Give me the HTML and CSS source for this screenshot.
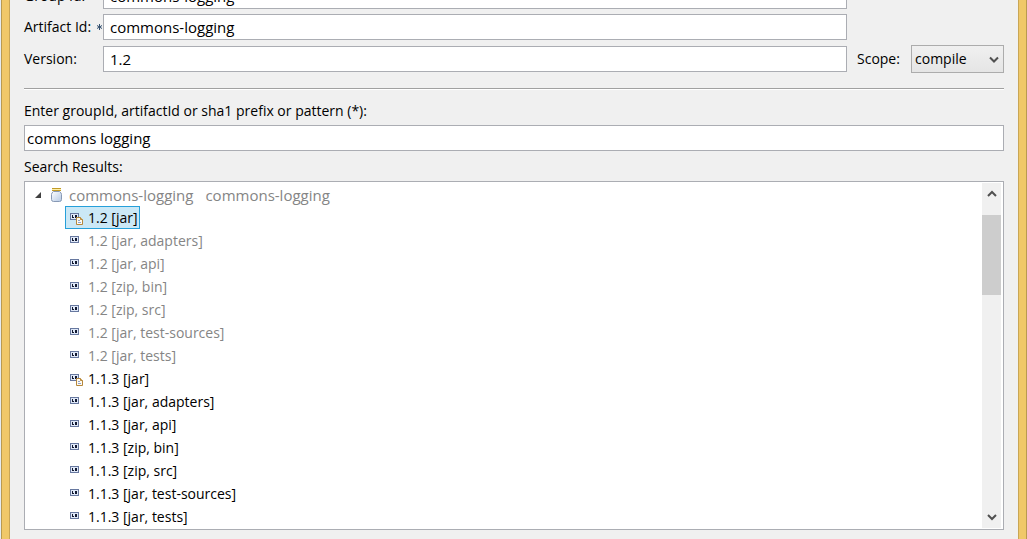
FILE: index.html
```html
<!DOCTYPE html>
<html lang="en">
<head>
  <meta charset="UTF-8" />
  <meta name="viewport" content="width=device-width, initial-scale=1.0"/>
  <title>Select Dependency</title>
  <link rel="stylesheet" href="styles.css">
</head>
<body>
<svg class="sprite" aria-hidden="true">
  <defs>
    <linearGradient id="glass" x1="0" y1="0" x2="1" y2="1">
      <stop offset="0" stop-color="#ffffff"/>
      <stop offset="1" stop-color="#b4c8e4"/>
    </linearGradient>
  </defs>
  <symbol id="jar" viewBox="0 0 11 14">
    <path d="M1 .5h9M1 2.5h9" stroke="#c09a28"/>
    <path d="M1 1.5h9" stroke="#fff0a8"/>
    <path d="M2.5 3.5h6q2 1.2 2 3v5q0 2-2 2h-6q-2 0-2-2v-5q0-1.8 2-3z" fill="url(#glass)" stroke="#8799b5"/>
  </symbol>
  <symbol id="binary" viewBox="0 0 9 7">
    <rect x=".5" y=".5" width="8" height="6" fill="#dfe8f8" stroke="#67789f"/>
    <path d="M2 2h1v2h1v1h-2z" fill="#101830"/>
    <rect x="5.500" y="2.500" width="1" height="2" fill="none" stroke="#101830"/>
  </symbol>
  <symbol id="binary-source" viewBox="0 0 13 15">
    <use href="#binary" y="3" width="9" height="7"/>
    <path d="M6.500 7.500h4l2 2v5h-6z" fill="#fffaf0" stroke="#b5873c"/>
    <path d="M10.500 7.500v2h2" fill="#f2d48c" stroke="#b5873c"/>
    <path d="M8 10.500h2M8 12.500h3" stroke="#8fa3cc"/>
  </symbol>
</svg>

<main class="dialog">
  <div class="fields">
    <label for="group">Group Id:</label>
    <input type="text" id="group" value="commons-logging" />

    <label for="artifact" class="required">Artifact Id:
      <svg width="5" height="6" viewBox="0 0 5 6"><path d="M2.500 0v6M0 1.500l5 3M0 4.500l5-3" stroke="#34506f"/></svg>
    </label>
    <input type="text" id="artifact" value="commons-logging" />

    <label for="version">Version:</label>
    <input type="text" id="version" value="1.2" />
    <label for="scope" class="scope-label">Scope:</label>
    <div class="select">
      <select id="scope">
        <option>compile</option>
        <option>provided</option>
        <option>runtime</option>
        <option>test</option>
      </select>
      <svg width="10" height="8" viewBox="0 0 10 8"><path d="M1 1.500l4 4 4-4" fill="none" stroke="#505050" stroke-width="2"/></svg>
    </div>
  </div>

  <hr>

  <label for="search" class="query-label">Enter groupId, artifactId or sha1 prefix or pattern (*):</label>
  <input type="text" id="search" class="query" value="commons logging" />

  <div class="results-label" id="results-label">Search Results:</div>
  <div class="results">
    <ul class="tree" role="tree" aria-labelledby="results-label">
      <li class="root gray">
        <svg class="arrow" width="7" height="7" viewBox="0 0 7 7"><path d="M6 1v6H0z" fill="#404040"/></svg>
        <svg class="jar" width="11" height="14"><use href="#jar"/></svg>
        <span>commons-logging</span>
        <span>commons-logging</span>
      </li>
      <li class="selected"><svg><use href="#binary-source" width="13" height="15"/></svg>1.2 [jar]</li>
      <li class="gray"><svg><use href="#binary" y="3" width="9" height="7"/></svg>1.2 [jar, adapters]</li>
      <li class="gray"><svg><use href="#binary" y="3" width="9" height="7"/></svg>1.2 [jar, api]</li>
      <li class="gray"><svg><use href="#binary" y="3" width="9" height="7"/></svg>1.2 [zip, bin]</li>
      <li class="gray"><svg><use href="#binary" y="3" width="9" height="7"/></svg>1.2 [zip, src]</li>
      <li class="gray"><svg><use href="#binary" y="3" width="9" height="7"/></svg>1.2 [jar, test-sources]</li>
      <li class="gray"><svg><use href="#binary" y="3" width="9" height="7"/></svg>1.2 [jar, tests]</li>
      <li><svg><use href="#binary-source" width="13" height="15"/></svg>1.1.3 [jar]</li>
      <li><svg><use href="#binary" y="3" width="9" height="7"/></svg>1.1.3 [jar, adapters]</li>
      <li><svg><use href="#binary" y="3" width="9" height="7"/></svg>1.1.3 [jar, api]</li>
      <li><svg><use href="#binary" y="3" width="9" height="7"/></svg>1.1.3 [zip, bin]</li>
      <li><svg><use href="#binary" y="3" width="9" height="7"/></svg>1.1.3 [zip, src]</li>
      <li><svg><use href="#binary" y="3" width="9" height="7"/></svg>1.1.3 [jar, test-sources]</li>
      <li><svg><use href="#binary" y="3" width="9" height="7"/></svg>1.1.3 [jar, tests]</li>
    </ul>
    <div class="scrollbar">
      <button type="button" aria-label="Scroll up"><svg width="10" height="8" viewBox="0 0 10 8"><path d="M1 6l4-4 4 4" fill="none" stroke="#505050" stroke-width="2"/></svg></button>
      <div class="track"><div class="thumb"></div></div>
      <button type="button" aria-label="Scroll down"><svg width="10" height="8" viewBox="0 0 10 8"><path d="M1 2l4 4 4-4" fill="none" stroke="#505050" stroke-width="2"/></svg></button>
    </div>
  </div>
</main>
</body>
</html>
```
FILE: styles.css
```css
* { box-sizing: border-box; }
body { margin: 0; padding-left: 1px; height: 100vh; overflow: hidden; background: #e4ebf2; color: #000; font: 14px/20px "Open Sans", "Noto Sans", sans-serif; }
input, select { font: inherit; color: inherit; border: 1px solid #abadb3; border-radius: 0; outline: none; }
input { width: 100%; height: 26px; padding: 0 6px; background: #fff; font-size: 15px; }
.sprite { position: absolute; width: 0; height: 0; }

/* gold window frame */
.dialog { display: flex; flex-direction: column; height: 100vh; padding: 0 14px 9px; background: #f0f0f0; border: solid #f0c869; border-width: 0 9px; border-image: linear-gradient(to right, #b99a50 1px, #f0c869 1px, #f0c869 8px, #c9a655 8px, #c9a655 calc(100% - 8px), #f0c869 calc(100% - 8px), #f0c869 calc(100% - 1px), #b99a50 calc(100% - 1px)) 0 9; }

/* scrolled down, the first row is partly out of view */
.fields { display: grid; grid-template-columns: 79px 1fr 64px 93px; row-gap: 5px; align-items: center; margin-top: -17px; }
.fields label { grid-column: 1; white-space: nowrap; }
.fields input { grid-column: 2; }
.fields .required { display: flex; align-items: center; justify-content: space-between; padding-right: 1px; }
.fields .scope-label { grid-column: 3; padding-left: 10px; }
.select { position: relative; }
.select select { display: block; width: 100%; height: 28px; padding: 0 20px 0 3px; appearance: none; background: linear-gradient(#f0f0f0, #e5e5e5); border-color: #acacac; }
.select svg { position: absolute; right: 5px; top: 11px; pointer-events: none; }

hr { width: 100%; height: 2px; margin: 15px 0 0; border: 0; border-top: 1px solid #a0a0a0; background: #fff; flex: none; }
.query-label { margin: 11px 0 4px; }
.query { padding: 0 2px; flex: none; }
.results-label { margin: 6px 0 4px; }

.results { display: flex; flex: 1; min-height: 0; padding: 1px 2px 1px 1px; background: #fff; border: 1px solid #abadb3; }
.tree { flex: 1; margin: 0; padding: 0; overflow: hidden; list-style: none; }
.tree li { display: flex; align-items: center; width: max-content; height: 23px; margin-left: 39px; padding: 0 1px 0 4px; border: 1px solid transparent; }
.tree li > svg { width: 13px; height: 15px; margin-right: 5px; }
.tree .gray { color: #858585; }
.tree .selected { background: #cbe8f6; border-color: #26a0da; }
.tree .root { margin-left: 8px; padding: 0; font-size: 15px; }
.tree .root .arrow { width: 7px; height: 7px; margin-right: 9px; }
.tree .root .jar { width: 11px; height: 14px; margin-right: 7px; }
.tree .root span + span { margin-left: 12px; }

.scrollbar { display: flex; flex-direction: column; width: 19px; background: #f0f0f0; }
.scrollbar button { display: flex; align-items: center; justify-content: center; height: 22px; padding: 0; border: 0; background: none; }
.track { flex: 1; padding-top: 10px; }
.thumb { height: 80px; background: #cdcdcd; }
```
